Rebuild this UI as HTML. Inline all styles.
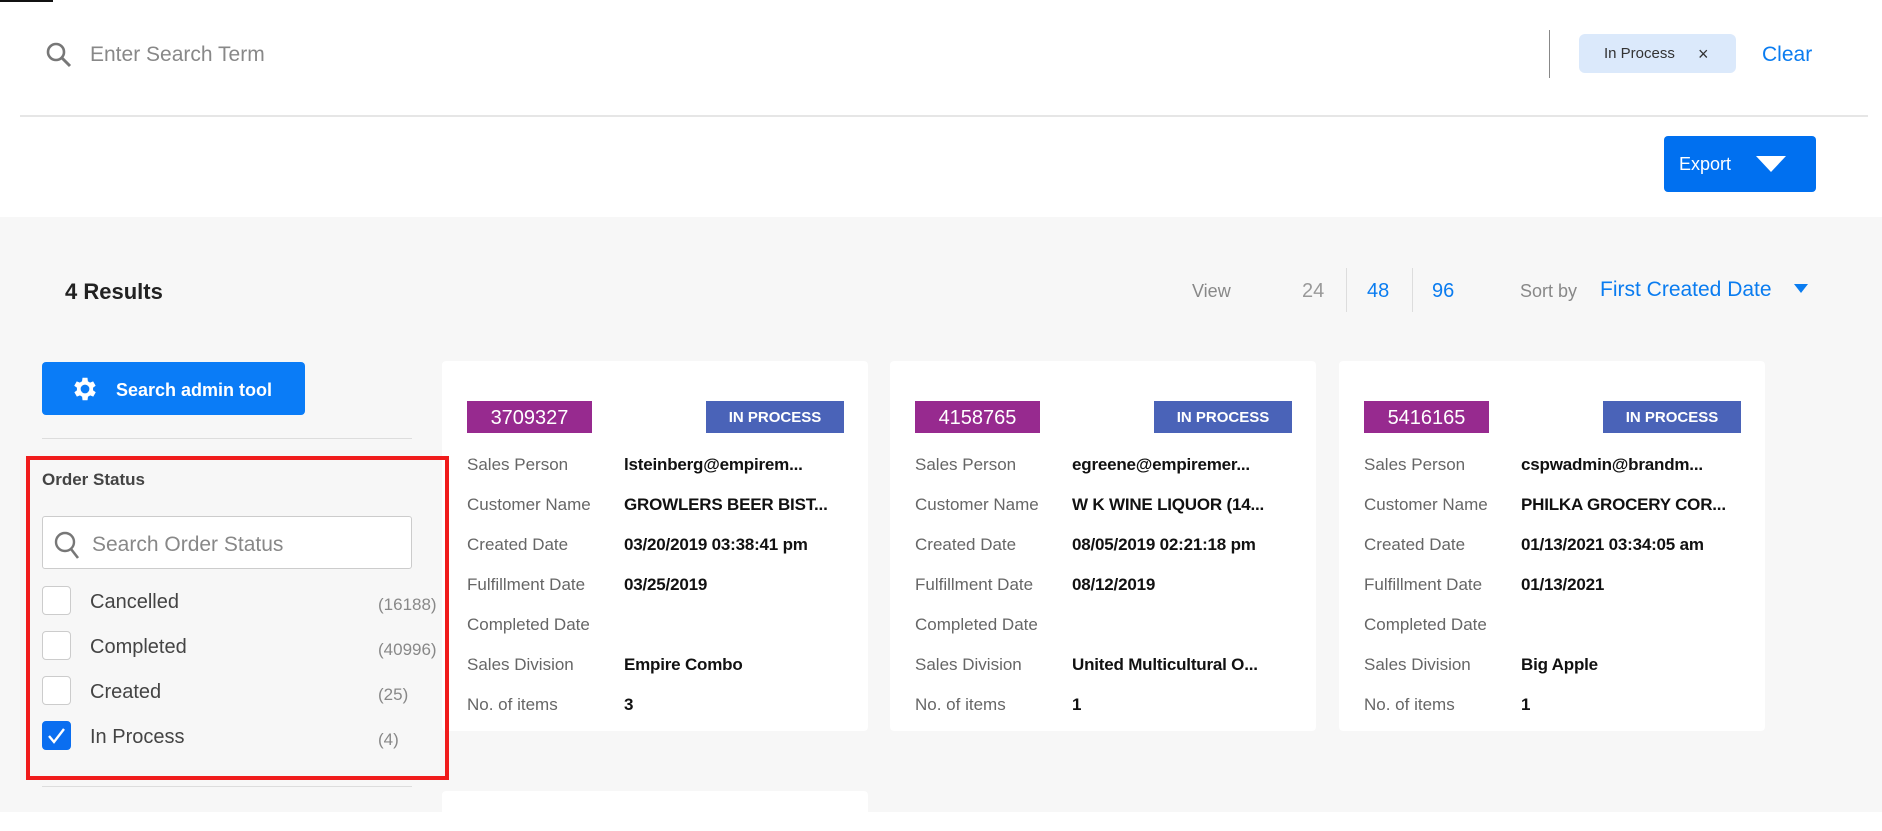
<!DOCTYPE html>
<html><head><style>
*{box-sizing:border-box;margin:0;padding:0}
body{width:1882px;height:812px;overflow:hidden;background:#fff;font-family:"Liberation Sans",sans-serif;position:relative;color:#222}
.a{position:absolute;white-space:nowrap}
.gray{position:absolute;left:0;top:217px;width:1882px;height:595px;background:#f7f7f7}
.card{position:absolute;top:361px;width:426px;height:370px;background:#fff;border-radius:4px}
.tag{position:absolute;left:25px;top:40px;width:125px;height:32px;background:#972a8f;color:#fff;font-size:20px;text-align:center;line-height:34px}
.badge{position:absolute;left:264px;top:40px;width:138px;height:32px;background:#4a63b8;color:#fff;font-size:15px;font-weight:bold;text-align:center;line-height:34px}
.lb{position:absolute;left:25px;font-size:17px;color:#666;white-space:nowrap;margin-top:2px}
.vl{position:absolute;left:182px;font-size:17px;color:#111;white-space:nowrap;font-weight:bold;letter-spacing:-.2px;margin-top:2px}
.cb{position:absolute;left:42px;width:29px;height:29px;border:1px solid #ccc;border-radius:4px;background:#fff}
.cl{position:absolute;left:90px;font-size:20px;color:#444;margin-top:2px}
.cn{position:absolute;left:378px;font-size:17px;color:#888;margin-top:2px}
</style></head><body>
<div class="a" style="left:0;top:0;width:53px;height:2px;background:#111"></div>
<svg class="a" style="left:45px;top:41px" width="28" height="28" viewBox="0 0 28 28"><circle cx="11" cy="11" r="8" fill="none" stroke="#777" stroke-width="2.6"/><line x1="17" y1="17" x2="25" y2="25" stroke="#777" stroke-width="3"/></svg>
<div class="a" style="left:90px;top:43px;font-size:21px;color:#888">Enter Search Term</div>
<div class="a" style="left:1549px;top:30px;width:1px;height:48px;background:#888"></div>
<div class="a" style="left:1579px;top:34px;width:157px;height:39px;background:#dbe9fb;border-radius:6px"></div>
<div class="a" style="left:1604px;top:45px;font-size:15px;color:#333">In Process</div>
<div class="a" style="left:1698px;top:44px;font-size:18px;color:#333">×</div>
<div class="a" style="left:1762px;top:43px;font-size:21px;color:#0a7cf0">Clear</div>
<div class="a" style="left:20px;top:115px;width:1848px;height:2px;background:#e6e6e6"></div>
<div class="a" style="left:1664px;top:136px;width:152px;height:56px;background:#0070f0;border-radius:4px"></div>
<div class="a" style="left:1679px;top:154px;font-size:18px;color:#fff">Export</div>
<svg class="a" style="left:1756px;top:156px" width="30" height="16"><polygon points="0,0 30,0 15,16" fill="#fff"/></svg>
<div class="gray"></div>
<div class="a" style="left:65px;top:279px;font-size:22px;font-weight:bold;color:#222">4 Results</div>
<div class="a" style="left:1192px;top:281px;font-size:18px;color:#888">View</div>
<div class="a" style="left:1302px;top:280px;font-size:20px;color:#999">24</div>
<div class="a" style="left:1346px;top:268px;width:1px;height:44px;background:#ddd"></div>
<div class="a" style="left:1367px;top:280px;font-size:20px;color:#0a7cf0">48</div>
<div class="a" style="left:1412px;top:268px;width:1px;height:44px;background:#ddd"></div>
<div class="a" style="left:1432px;top:280px;font-size:20px;color:#0a7cf0">96</div>
<div class="a" style="left:1520px;top:281px;font-size:18px;color:#888">Sort by</div>
<div class="a" style="left:1600px;top:278px;font-size:21px;color:#0a7cf0">First Created Date</div>
<svg class="a" style="left:1794px;top:284px" width="14" height="9"><polygon points="0,0 14,0 7,9" fill="#0a7cf0"/></svg>
<div class="a" style="left:42px;top:362px;width:263px;height:53px;background:#0a7cf7;border-radius:4px"></div>
<svg class="a" style="left:70px;top:374px" width="30" height="30" viewBox="0 0 24 24"><path fill="#fff" d="M19.4 13a7.5 7.5 0 0 0 0-2l2.1-1.6-2-3.5-2.5 1a7 7 0 0 0-1.7-1L15 3h-4l-.4 2.9a7 7 0 0 0-1.7 1l-2.5-1-2 3.5L6.6 11a7.5 7.5 0 0 0 0 2l-2.1 1.6 2 3.5 2.5-1a7 7 0 0 0 1.7 1L11 21h4l.4-2.9a7 7 0 0 0 1.7-1l2.5 1 2-3.5zM13 15.5a3.5 3.5 0 1 1 0-7 3.5 3.5 0 0 1 0 7z" transform="translate(-1 0)"/></svg>
<div class="a" style="left:116px;top:380px;font-size:18px;font-weight:bold;color:#fff">Search admin tool</div>
<div class="a" style="left:42px;top:438px;width:370px;height:1px;background:#ddd"></div>
<div class="a" style="left:42px;top:470px;font-size:17px;font-weight:bold;color:#444">Order Status</div>
<div class="a" style="left:42px;top:516px;width:370px;height:53px;background:#fff;border:1px solid #ccc;border-radius:3px"></div>
<svg class="a" style="left:53px;top:530px" width="28" height="30" viewBox="0 0 28 30"><circle cx="12" cy="12" r="9" fill="none" stroke="#777" stroke-width="2.4"/><line x1="18" y1="19" x2="25" y2="28" stroke="#777" stroke-width="2.6"/></svg>
<div class="a" style="left:92px;top:533px;font-size:21px;color:#888">Search Order Status</div>
<div class="cb" style="top:586px"></div><div class="cl" style="top:589px">Cancelled</div><div class="cn" style="top:593px">(16188)</div>
<div class="cb" style="top:631px"></div><div class="cl" style="top:634px">Completed</div><div class="cn" style="top:638px">(40996)</div>
<div class="cb" style="top:676px"></div><div class="cl" style="top:679px">Created</div><div class="cn" style="top:683px">(25)</div>
<div class="cb" style="top:721px;background:#0a6ef0;border-color:#0a6ef0"><svg width="27" height="27"><polyline points="6,14 11,20 21,7" fill="none" stroke="#fff" stroke-width="2.4"/></svg></div><div class="cl" style="top:724px">In Process</div><div class="cn" style="top:728px">(4)</div>
<div class="a" style="left:42px;top:786px;width:370px;height:1px;background:#ddd"></div>

<div class="card" style="left:442px">
<div class="tag">3709327</div><div class="badge">IN PROCESS</div>
<div class="lb" style="top:92px">Sales Person</div><div class="vl" style="top:92px">lsteinberg@empirem...</div>
<div class="lb" style="top:132px">Customer Name</div><div class="vl" style="top:132px">GROWLERS BEER BIST...</div>
<div class="lb" style="top:172px">Created Date</div><div class="vl" style="top:172px">03/20/2019 03:38:41 pm</div>
<div class="lb" style="top:212px">Fulfillment Date</div><div class="vl" style="top:212px">03/25/2019</div>
<div class="lb" style="top:252px">Completed Date</div>
<div class="lb" style="top:292px">Sales Division</div><div class="vl" style="top:292px">Empire Combo</div>
<div class="lb" style="top:332px">No. of items</div><div class="vl" style="top:332px">3</div>
</div>
<div class="card" style="left:890px">
<div class="tag">4158765</div><div class="badge">IN PROCESS</div>
<div class="lb" style="top:92px">Sales Person</div><div class="vl" style="top:92px">egreene@empiremer...</div>
<div class="lb" style="top:132px">Customer Name</div><div class="vl" style="top:132px">W K WINE LIQUOR (14...</div>
<div class="lb" style="top:172px">Created Date</div><div class="vl" style="top:172px">08/05/2019 02:21:18 pm</div>
<div class="lb" style="top:212px">Fulfillment Date</div><div class="vl" style="top:212px">08/12/2019</div>
<div class="lb" style="top:252px">Completed Date</div>
<div class="lb" style="top:292px">Sales Division</div><div class="vl" style="top:292px">United Multicultural O...</div>
<div class="lb" style="top:332px">No. of items</div><div class="vl" style="top:332px">1</div>
</div>
<div class="card" style="left:1339px">
<div class="tag">5416165</div><div class="badge">IN PROCESS</div>
<div class="lb" style="top:92px">Sales Person</div><div class="vl" style="top:92px">cspwadmin@brandm...</div>
<div class="lb" style="top:132px">Customer Name</div><div class="vl" style="top:132px">PHILKA GROCERY COR...</div>
<div class="lb" style="top:172px">Created Date</div><div class="vl" style="top:172px">01/13/2021 03:34:05 am</div>
<div class="lb" style="top:212px">Fulfillment Date</div><div class="vl" style="top:212px">01/13/2021</div>
<div class="lb" style="top:252px">Completed Date</div>
<div class="lb" style="top:292px">Sales Division</div><div class="vl" style="top:292px">Big Apple</div>
<div class="lb" style="top:332px">No. of items</div><div class="vl" style="top:332px">1</div>
</div>
<div class="card" style="left:442px;top:791px;height:40px"></div>
<div class="a" style="left:26px;top:456px;width:423px;height:324px;border:4px solid #f01c1c;z-index:5"></div>
</body></html>
